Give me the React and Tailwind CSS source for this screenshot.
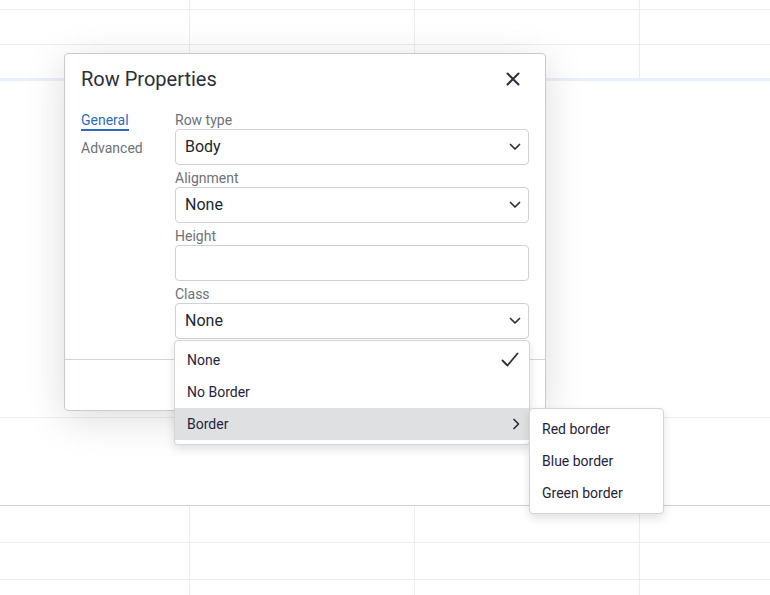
import React from "react";

const font = { fontFamily: "Roboto, 'Noto Sans', Arial, sans-serif" };

function ChevronDown() {
  return (
    <svg width="12" height="8" viewBox="0 0 12 8" fill="none" className="text-[#2b303b]">
      <path d="M1.5 1.5 L6 6 L10.5 1.5" stroke="currentColor" strokeWidth="1.7" strokeLinecap="round" strokeLinejoin="round" />
    </svg>
  );
}

function Select({ value }) {
  return (
    <div className="h-[36px] rounded-[4px] border border-[#cfd0d3] bg-white flex items-center justify-between pl-[9px] pr-[7px]">
      <span className="text-[16px] text-[#22262d]">{value}</span>
      {value !== null && <ChevronDown />}
    </div>
  );
}

function Field({ label, value, input }) {
  return (
    <div className="flex flex-col">
      <div className="pt-[4px] text-[14px] leading-[18px] text-[#6d7178]">{label}</div>
      {input ? (
        <div className="h-[36px] rounded-[4px] border border-[#cfd0d3] bg-white" />
      ) : (
        <Select value={value} />
      )}
    </div>
  );
}

function GridRow({ h, border = "border-[#ececec]", cols = true }) {
  return (
    <div className={`flex border-b ${border}`} style={{ height: h }}>
      <div className={`w-[190px] ${cols ? "border-r border-[#ececec]" : ""}`} />
      <div className={`w-[225px] ${cols ? "border-r border-[#ececec]" : ""}`} />
      <div className={`w-[225px] ${cols ? "border-r border-[#ececec]" : ""}`} />
      <div className="flex-1" />
    </div>
  );
}

export default function App() {
  return (
    <div className="relative w-[770px] h-[595px] overflow-hidden bg-white" style={font}>
      {/* background grid */}
      <div className="flex flex-col">
        <GridRow h={10} />
        <GridRow h={35} />
        <div className="flex h-[33px]">
          <div className="w-[190px] border-r border-[#ececec]" />
          <div className="w-[225px] border-r border-[#ececec]" />
          <div className="w-[225px] border-r border-[#ececec]" />
          <div className="flex-1" />
        </div>
        <div className="h-[3px] bg-[#eaf0fb]" />
        <div className="h-[337px] border-b border-[#efefef]" />
        <div className="h-[88px] border-b border-[#cfcfcf]" />
        <GridRow h={37} />
        <GridRow h={37} />
        <GridRow h={37} />
      </div>

      {/* modal */}
      <div className="absolute left-[64px] top-[53px] w-[482px] h-[358px] rounded-[4px] border border-[#c9cacd] bg-white shadow-[0_8px_40px_rgba(0,0,0,0.14)] flex flex-col">
        <div className="h-[53px] flex items-start justify-between pl-[16px] pr-[25px] pt-[11px]">
          <span className="text-[20px] leading-[28px] text-[#2a2f3a]">Row Properties</span>
          <svg width="14" height="14" viewBox="0 0 14 14" className="mt-[7px] text-[#2a2f3a]">
            <path d="M1.5 1.5 L12.5 12.5 M12.5 1.5 L1.5 12.5" stroke="currentColor" strokeWidth="2" strokeLinecap="round" />
          </svg>
        </div>
        <div className="flex pl-[16px] pr-[16px]">
          <div className="w-[94px] flex flex-col">
            <div className="pt-[4px] flex">
              <div className="flex flex-col">
                <span className="text-[14px] leading-[18px] text-[#2f6bbd]">General</span>
                <div className="h-[2px] bg-[#2f6bbd]" />
              </div>
            </div>
            <span className="mt-[8px] text-[14px] leading-[18px] text-[#6d7178]">Advanced</span>
          </div>
          <div className="flex-1 flex flex-col">
            <Field label="Row type" value="Body" />
            <Field label="Alignment" value="None" />
            <Field label="Height" input />
            <Field label="Class" value="None" />
          </div>
        </div>
        <div className="mt-[20px] border-t border-[#d3d4d6] flex-1" />
      </div>

      {/* dropdown */}
      <div className="absolute left-[174px] top-[340px] w-[356px] h-[105px] rounded-[4px] border border-[#d3d4d6] bg-white shadow-[0_4px_10px_rgba(0,0,0,0.12)] py-[3px] text-[14px] text-[#1f2340]">
        <div className="h-[32px] flex items-center justify-between pl-[12px] pr-[10px]">
          <span>None</span>
          <svg width="18" height="16" viewBox="0 0 18 16" fill="none" className="text-[#2b303b]">
            <path d="M1.5 8.5 L6.5 13.5 L16.5 1.5" stroke="currentColor" strokeWidth="1.8" strokeLinecap="round" strokeLinejoin="round" />
          </svg>
        </div>
        <div className="h-[32px] flex items-center pl-[12px]">No Border</div>
        <div className="h-[32px] flex items-center justify-between pl-[12px] pr-[9px] bg-[#dfe0e2]">
          <span>Border</span>
          <svg width="8" height="12" viewBox="0 0 8 12" fill="none" className="text-[#2b303b]">
            <path d="M2 1.5 L6.5 6 L2 10.5" stroke="currentColor" strokeWidth="1.7" strokeLinecap="round" strokeLinejoin="round" />
          </svg>
        </div>
      </div>

      {/* submenu */}
      <div className="absolute left-[529px] top-[408px] w-[135px] h-[106px] rounded-[4px] border border-[#d3d4d6] bg-white shadow-[0_4px_10px_rgba(0,0,0,0.12)] pt-[4px] text-[14px] text-[#1f2340]">
        <div className="h-[32px] flex items-center pl-[12px]">Red border</div>
        <div className="h-[32px] flex items-center pl-[12px]">Blue border</div>
        <div className="h-[32px] flex items-center pl-[12px]">Green border</div>
      </div>
    </div>
  );
}
